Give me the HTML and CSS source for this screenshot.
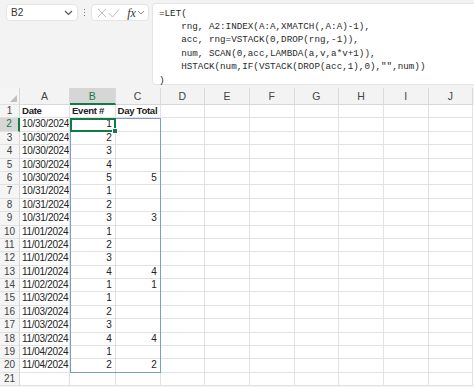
FILE: index.html
```html
<!DOCTYPE html>
<html>
<head>
<meta charset="utf-8">
<link rel="stylesheet" href="styles.css">
</head>
<body>
<div class="topbar">
  <div class="namebox">
    <span>B2</span>
    <svg class="chev" width="9" height="6" viewBox="0 0 9 6"><path d="M1 1l3.5 3.5L8 1" fill="none" stroke="#555" stroke-width="1.1"/></svg>
  </div>
  <div class="dots"><i></i><i></i><i></i></div>
  <div class="fxbox">
    <svg width="10" height="10" viewBox="0 0 10 10"><path d="M1 1l8 8M9 1l-8 8" stroke="#bdbdbd" stroke-width="1"/></svg>
    <svg width="12" height="10" viewBox="0 0 12 10"><path d="M1 5.5l3.5 3.5L11 1.5" fill="none" stroke="#bdbdbd" stroke-width="1"/></svg>
    <span class="fx">fx</span>
    <svg class="chev" width="8" height="6" viewBox="0 0 8 6"><path d="M1 1l3 3 3-3" fill="none" stroke="#888" stroke-width="1"/></svg>
  </div>
  <div class="formula"><pre>=LET(
    rng, A2:INDEX(A:A,XMATCH(,A:A)-1),
    acc, rng=VSTACK(0,DROP(rng,-1)),
    num, SCAN(0,acc,LAMBDA(a,v,a*v+1)),
    HSTACK(num,IF(VSTACK(DROP(acc,1),0),"",num))
)</pre></div>
</div>
<div class="sheet">
  <div class="row hrow">
    <div class="rh corner"><span class="tri"></span></div>
    <div class="ch a">A</div><div class="ch b sel">B</div><div class="ch cc">C</div>
    <div class="ch">D</div><div class="ch">E</div><div class="ch">F</div><div class="ch">G</div><div class="ch">H</div><div class="ch">I</div><div class="ch">J</div>
  </div>
  <div class="row"><div class="rh">1</div><div class="c a bold">Date</div><div class="c b bold">Event #</div><div class="c cc bold">Day Total</div><div class="c"></div><div class="c"></div><div class="c"></div><div class="c"></div><div class="c"></div><div class="c"></div><div class="c"></div></div>
  <div class="row"><div class="rh sel">2</div><div class="c a">10/30/2024</div><div class="c b n">1</div><div class="c cc n"></div><div class="c"></div><div class="c"></div><div class="c"></div><div class="c"></div><div class="c"></div><div class="c"></div><div class="c"></div></div>
  <div class="row"><div class="rh">3</div><div class="c a">10/30/2024</div><div class="c b n">2</div><div class="c cc n"></div><div class="c"></div><div class="c"></div><div class="c"></div><div class="c"></div><div class="c"></div><div class="c"></div><div class="c"></div></div>
  <div class="row"><div class="rh">4</div><div class="c a">10/30/2024</div><div class="c b n">3</div><div class="c cc n"></div><div class="c"></div><div class="c"></div><div class="c"></div><div class="c"></div><div class="c"></div><div class="c"></div><div class="c"></div></div>
  <div class="row"><div class="rh">5</div><div class="c a">10/30/2024</div><div class="c b n">4</div><div class="c cc n"></div><div class="c"></div><div class="c"></div><div class="c"></div><div class="c"></div><div class="c"></div><div class="c"></div><div class="c"></div></div>
  <div class="row"><div class="rh">6</div><div class="c a">10/30/2024</div><div class="c b n">5</div><div class="c cc n">5</div><div class="c"></div><div class="c"></div><div class="c"></div><div class="c"></div><div class="c"></div><div class="c"></div><div class="c"></div></div>
  <div class="row"><div class="rh">7</div><div class="c a">10/31/2024</div><div class="c b n">1</div><div class="c cc n"></div><div class="c"></div><div class="c"></div><div class="c"></div><div class="c"></div><div class="c"></div><div class="c"></div><div class="c"></div></div>
  <div class="row"><div class="rh">8</div><div class="c a">10/31/2024</div><div class="c b n">2</div><div class="c cc n"></div><div class="c"></div><div class="c"></div><div class="c"></div><div class="c"></div><div class="c"></div><div class="c"></div><div class="c"></div></div>
  <div class="row"><div class="rh">9</div><div class="c a">10/31/2024</div><div class="c b n">3</div><div class="c cc n">3</div><div class="c"></div><div class="c"></div><div class="c"></div><div class="c"></div><div class="c"></div><div class="c"></div><div class="c"></div></div>
  <div class="row"><div class="rh">10</div><div class="c a">11/01/2024</div><div class="c b n">1</div><div class="c cc n"></div><div class="c"></div><div class="c"></div><div class="c"></div><div class="c"></div><div class="c"></div><div class="c"></div><div class="c"></div></div>
  <div class="row"><div class="rh">11</div><div class="c a">11/01/2024</div><div class="c b n">2</div><div class="c cc n"></div><div class="c"></div><div class="c"></div><div class="c"></div><div class="c"></div><div class="c"></div><div class="c"></div><div class="c"></div></div>
  <div class="row"><div class="rh">12</div><div class="c a">11/01/2024</div><div class="c b n">3</div><div class="c cc n"></div><div class="c"></div><div class="c"></div><div class="c"></div><div class="c"></div><div class="c"></div><div class="c"></div><div class="c"></div></div>
  <div class="row"><div class="rh">13</div><div class="c a">11/01/2024</div><div class="c b n">4</div><div class="c cc n">4</div><div class="c"></div><div class="c"></div><div class="c"></div><div class="c"></div><div class="c"></div><div class="c"></div><div class="c"></div></div>
  <div class="row"><div class="rh">14</div><div class="c a">11/02/2024</div><div class="c b n">1</div><div class="c cc n">1</div><div class="c"></div><div class="c"></div><div class="c"></div><div class="c"></div><div class="c"></div><div class="c"></div><div class="c"></div></div>
  <div class="row"><div class="rh">15</div><div class="c a">11/03/2024</div><div class="c b n">1</div><div class="c cc n"></div><div class="c"></div><div class="c"></div><div class="c"></div><div class="c"></div><div class="c"></div><div class="c"></div><div class="c"></div></div>
  <div class="row"><div class="rh">16</div><div class="c a">11/03/2024</div><div class="c b n">2</div><div class="c cc n"></div><div class="c"></div><div class="c"></div><div class="c"></div><div class="c"></div><div class="c"></div><div class="c"></div><div class="c"></div></div>
  <div class="row"><div class="rh">17</div><div class="c a">11/03/2024</div><div class="c b n">3</div><div class="c cc n"></div><div class="c"></div><div class="c"></div><div class="c"></div><div class="c"></div><div class="c"></div><div class="c"></div><div class="c"></div></div>
  <div class="row"><div class="rh">18</div><div class="c a">11/03/2024</div><div class="c b n">4</div><div class="c cc n">4</div><div class="c"></div><div class="c"></div><div class="c"></div><div class="c"></div><div class="c"></div><div class="c"></div><div class="c"></div></div>
  <div class="row"><div class="rh">19</div><div class="c a">11/04/2024</div><div class="c b n">1</div><div class="c cc n"></div><div class="c"></div><div class="c"></div><div class="c"></div><div class="c"></div><div class="c"></div><div class="c"></div><div class="c"></div></div>
  <div class="row"><div class="rh">20</div><div class="c a">11/04/2024</div><div class="c b n">2</div><div class="c cc n">2</div><div class="c"></div><div class="c"></div><div class="c"></div><div class="c"></div><div class="c"></div><div class="c"></div><div class="c"></div></div>
  <div class="row"><div class="rh">21</div><div class="c a"></div><div class="c b"></div><div class="c cc"></div><div class="c"></div><div class="c"></div><div class="c"></div><div class="c"></div><div class="c"></div><div class="c"></div><div class="c"></div></div>
  <div class="range"></div>
  <div class="active"><span class="handle"></span></div>
</div>
</body>
</html>
```
FILE: styles.css
```css
html, body {
  margin: 0;
  padding: 0;
}
body {
  width: 474px;
  height: 387px;
  overflow: hidden;
  background: #f3f3f3;
  font-family: "Liberation Sans", Arial, sans-serif;
  color: #222;
}
.topbar {
  display: flex;
  align-items: flex-start;
  height: 88px;
  box-sizing: border-box;
  padding: 4px 0 0 6px;
}
.namebox {
  width: 72px;
  height: 17px;
  box-sizing: border-box;
  background: #fff;
  border: 1px solid #e4e4e4;
  border-radius: 4px;
  display: flex;
  align-items: center;
  justify-content: space-between;
  padding: 0 4px 0 4px;
  font-size: 10px;
  color: #333;
}
.dots {
  width: 13px;
  height: 17px;
  display: flex;
  flex-direction: column;
  align-items: center;
  justify-content: center;
  gap: 1.5px;
}
.dots i {
  width: 1.6px;
  height: 1.6px;
  background: #555;
  border-radius: 50%;
}
.fxbox {
  width: 58px;
  height: 17px;
  box-sizing: border-box;
  background: #fff;
  border: 1px solid #e4e4e4;
  border-radius: 4px;
  display: flex;
  align-items: center;
  justify-content: space-between;
  padding: 0 3px 0 5px;
}
.fx {
  font-family: "Liberation Serif", serif;
  font-style: italic;
  font-size: 12px;
  color: #333;
  line-height: 1;
  margin-left: 6px;
}
.formula {
  flex: 1;
  height: 82px;
  margin-left: 3px;
  margin-top: -1px;
  box-sizing: border-box;
  background: #fff;
  border: 1px solid #e4e4e4;
  border-right: none;
  border-radius: 4px 0 0 4px;
  padding: 2.5px 0 0 6px;
}
.formula pre {
  margin: 0;
  font-family: "Liberation Mono", "DejaVu Sans Mono", monospace;
  font-size: 9.25px;
  line-height: 13.4px;
  color: #2a2a2a;
}
.sheet {
  position: relative;
  background: #fff;
}
.row {
  display: flex;
  height: 13.4px;
}
.hrow {
  height: 17px;
  background: #f3f3f3;
}
.rh, .c, .ch {
  box-sizing: border-box;
  flex: none;
  width: 44.7px;
  border-right: 1px solid #e2e2e2;
  border-bottom: 1px solid #e2e2e2;
  font-size: 10px;
  letter-spacing: -0.3px;
  line-height: 12.6px;
  white-space: nowrap;
  overflow: hidden;
}
.rh {
  width: 20px;
  background: #f5f5f5;
  border-right-color: #d6d6d6;
  text-align: center;
  color: #444;
  letter-spacing: 0;
}
.ch {
  text-align: center;
  line-height: 16px;
  font-size: 10.5px;
  letter-spacing: 0;
  color: #444;
  border-right-color: #dadada;
  border-bottom-color: #d6d6d6;
}
.corner {
  position: relative;
  line-height: 16px;
}
.tri {
  position: absolute;
  right: 2px;
  bottom: 2px;
  width: 0;
  height: 0;
  border-left: 7px solid transparent;
  border-bottom: 7px solid #bfbfbf;
}
.a { width: 50px; }
.b { width: 45.5px; }
.cc { width: 45px; }
.c.a { padding-left: 2px; }
.n {
  text-align: right;
  padding-right: 3px;
}
.bold {
  font-weight: bold;
  font-size: 9.6px;
  letter-spacing: -0.3px;
  padding-left: 2px;
}
.sel {
  background: #d6d6d6;
  color: #137a43;
}
.ch.sel {
  border-bottom: 2px solid #137a43;
}
.rh.sel {
  border-right: 2px solid #137a43;
}
.range {
  position: absolute;
  left: 70px;
  top: 30.4px;
  width: 91px;
  height: 255px;
  box-sizing: border-box;
  border: 1px solid #7b9bd1;
  pointer-events: none;
}
.active {
  position: absolute;
  left: 69.5px;
  top: 30px;
  width: 46.5px;
  height: 14.4px;
  box-sizing: border-box;
  border: 2px solid #137a43;
}
.handle {
  position: absolute;
  right: -4px;
  bottom: -4px;
  width: 4px;
  height: 4px;
  background: #137a43;
  border: 1px solid #fff;
}
```
